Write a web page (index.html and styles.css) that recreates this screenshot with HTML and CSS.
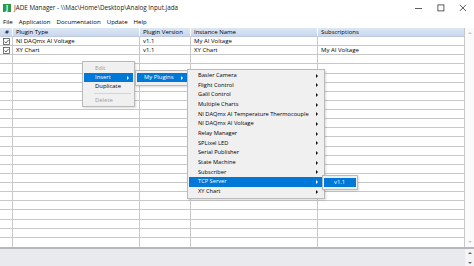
FILE: index.html
```html
<!DOCTYPE html>
<html lang="en">
<head>
    <meta charset="UTF-8">
    <title>JADE Manager</title>
    <link rel="stylesheet" href="styles.css">
</head>
<body>
    <div class="window">
        <!-- Title bar -->
        <div class="titlebar">
            <span class="app-icon">J</span>
            <span class="title">JADE Manager - \\Mac\Home\Desktop\Analog Input.jada</span>
            <div class="win-controls">
                <svg width="8" height="8" viewBox="0 0 8 8"><line x1="0" y1="4.5" x2="7" y2="4.5" stroke="#333" stroke-width="0.8"/></svg>
                <svg width="8" height="8" viewBox="0 0 8 8"><rect x="0.9" y="0.9" width="6" height="6" fill="none" stroke="#333" stroke-width="0.8"/></svg>
                <svg width="8" height="8" viewBox="0 0 8 8"><path d="M0.8 0.8 L7 7 M7 0.8 L0.8 7" stroke="#333" stroke-width="0.8"/></svg>
            </div>
        </div>

        <!-- Menu bar -->
        <div class="menubar">
            <span>File</span>
            <span>Application</span>
            <span>Documentation</span>
            <span>Update</span>
            <span>Help</span>
        </div>

        <!-- Plugin table -->
        <div class="grid-area">
            <div class="table">
                <div class="row head">
                    <span>#</span>
                    <span>Plugin Type</span>
                    <span>Plugin Version</span>
                    <span>Instance Name</span>
                    <span>Subscriptions</span>
                </div>
                <div class="row">
                    <span class="check"><svg width="7" height="7" viewBox="0 0 7 7"><rect x="0.5" y="0.5" width="6" height="6" fill="#fff" stroke="#555" stroke-width="0.8"/><path d="M1.5 3.6 L2.9 5 L5.6 2" fill="none" stroke="#333" stroke-width="0.8"/></svg></span>
                    <span>NI DAQmx AI Voltage</span>
                    <span>v1.1</span>
                    <span>My AI Voltage</span>
                    <span></span>
                </div>
                <div class="row">
                    <span class="check"><svg width="7" height="7" viewBox="0 0 7 7"><rect x="0.5" y="0.5" width="6" height="6" fill="#fff" stroke="#555" stroke-width="0.8"/><path d="M1.5 3.6 L2.9 5 L5.6 2" fill="none" stroke="#333" stroke-width="0.8"/></svg></span>
                    <span>XY Chart</span>
                    <span>v1.1</span>
                    <span>XY Chart</span>
                    <span>My AI Voltage</span>
                </div>
                <div class="row"><span></span><span></span><span></span><span></span><span></span></div>
                <div class="row"><span></span><span></span><span></span><span></span><span></span></div>
                <div class="row"><span></span><span></span><span></span><span></span><span></span></div>
                <div class="row"><span></span><span></span><span></span><span></span><span></span></div>
                <div class="row"><span></span><span></span><span></span><span></span><span></span></div>
                <div class="row"><span></span><span></span><span></span><span></span><span></span></div>
                <div class="row"><span></span><span></span><span></span><span></span><span></span></div>
                <div class="row"><span></span><span></span><span></span><span></span><span></span></div>
                <div class="row"><span></span><span></span><span></span><span></span><span></span></div>
                <div class="row"><span></span><span></span><span></span><span></span><span></span></div>
                <div class="row"><span></span><span></span><span></span><span></span><span></span></div>
                <div class="row"><span></span><span></span><span></span><span></span><span></span></div>
                <div class="row"><span></span><span></span><span></span><span></span><span></span></div>
                <div class="row"><span></span><span></span><span></span><span></span><span></span></div>
                <div class="row"><span></span><span></span><span></span><span></span><span></span></div>
                <div class="row"><span></span><span></span><span></span><span></span><span></span></div>
                <div class="row"><span></span><span></span><span></span><span></span><span></span></div>
                <div class="row"><span></span><span></span><span></span><span></span><span></span></div>
                <div class="row"><span></span><span></span><span></span><span></span><span></span></div>
                <div class="row"><span></span><span></span><span></span><span></span><span></span></div>
                <div class="row last"><span></span><span></span><span></span><span></span><span></span></div>
            </div>
            <div class="vscroll">
                <span class="arrow-up"></span>
                <span class="arrow-down"></span>
            </div>
        </div>

        <!-- Log panel -->
        <div class="log-panel">
            <div class="vscroll small">
                <span class="arrow-up dark"></span>
                <span class="arrow-down dark"></span>
            </div>
        </div>

        <!-- Context menus -->
        <div class="menu menu-main">
            <div class="item disabled">Edit</div>
            <div class="item active sub">Insert</div>
            <div class="item">Duplicate</div>
            <div class="sep"></div>
            <div class="item disabled">Delete</div>
        </div>

        <div class="menu menu-plugins">
            <div class="item active sub">My Plugins</div>
        </div>

        <div class="menu menu-types">
            <div class="item sub">Basler Camera</div>
            <div class="item sub">Flight Control</div>
            <div class="item sub">Galil Control</div>
            <div class="item sub">Multiple Charts</div>
            <div class="item sub">NI DAQmx AI Temperature Thermocouple</div>
            <div class="item sub">NI DAQmx AI Voltage</div>
            <div class="item sub">Relay Manager</div>
            <div class="item sub">SPLixel LED</div>
            <div class="item sub">Serial Publisher</div>
            <div class="item sub">State Machine</div>
            <div class="item sub">Subscriber</div>
            <div class="item active sub">TCP Server</div>
            <div class="item sub">XY Chart</div>
        </div>

        <div class="menu menu-version">
            <div class="item active">v1.1</div>
        </div>
    </div>
</body>
</html>
```

FILE: styles.css
```css
:root {
    --highlight: #0078d7;
    --menu-bg: #f0f0f0;
    --menu-border: #b9b9b9;
    --grid-line: #c8c8c8;
    --text-dim: #9a9a9a;
}

body {
    margin: 0;
    background: #fff;
    font-family: 'Open Sans', 'Noto Sans', sans-serif;
    font-size: 6px;
    color: #000;
}

.window {
    position: relative;
    width: 474px;
    height: 266px;
    overflow: hidden;
    display: flex;
    flex-direction: column;
}

/* Title bar */
.titlebar {
    height: 15px;
    display: flex;
    align-items: center;
    padding-left: 3px;
}

.app-icon {
    width: 8px;
    height: 8px;
    background: #2f9a44;
    color: #fff;
    font-weight: bold;
    font-size: 6.5px;
    line-height: 8px;
    text-align: center;
    margin-right: 3px;
}

.title {
    font-size: 6.3px;
    color: #222;
}

.win-controls {
    margin-left: auto;
    display: flex;
    gap: 14px;
    padding-right: 7px;
}

/* Menu bar */
.menubar {
    height: 13px;
    display: flex;
    align-items: center;
    gap: 6px;
    padding-left: 3px;
    font-size: 6.1px;
}

/* Grid */
.grid-area {
    display: flex;
    height: 219px;
}

.table {
    width: 465px;
    border-right: 1px solid var(--grid-line);
    overflow: hidden;
}

.row {
    display: grid;
    grid-template-columns: 13px 127px 51px 127px 147px;
    height: 9.14px;
    box-sizing: border-box;
    border-bottom: 1px solid var(--grid-line);
}

.row span {
    border-right: 1px solid var(--grid-line);
    padding-left: 3px;
    line-height: 8px;
    white-space: nowrap;
    overflow: hidden;
}

.row span:last-child {
    border-right: none;
}

.row.head {
    height: 9px;
    background: linear-gradient(#dde7f4, #c7d8ee);
    border-bottom: 1px solid #c0cadb;
}

.row.head span {
    padding-left: 3px;
    border-right-color: #fff;
}

.row.head span:first-child {
    padding-left: 5px;
}

.row.last {
    border-bottom: none;
}

.check {
    display: flex;
    align-items: center;
}

.check svg {
    display: block;
}

.vscroll {
    width: 9px;
    background: #fafafa;
    display: flex;
    flex-direction: column;
    justify-content: space-between;
    align-items: center;
    padding: 4px 0;
    box-sizing: border-box;
}

.arrow-up,
.arrow-down {
    width: 0;
    height: 0;
    border-left: 2px solid transparent;
    border-right: 2px solid transparent;
}

.arrow-up {
    border-bottom: 2px solid #c8c8c8;
}

.arrow-down {
    border-top: 2px solid #c8c8c8;
}

.arrow-up.dark {
    border-bottom-color: #666;
}

.arrow-down.dark {
    border-top-color: #666;
}

/* Bottom log panel */
.log-panel {
    flex: 1;
    background: #e8eaed;
    border-top: 2px solid #b4b7bb;
    display: flex;
    justify-content: flex-end;
}

.vscroll.small {
    background: #f4f4f4;
    padding: 3px 0 2px;
}

/* Context menus */
.menu {
    position: absolute;
    background: var(--menu-bg);
    border: 1px solid var(--menu-border);
    box-shadow: 1px 1px 2px rgba(0, 0, 0, 0.15);
    padding: 1px 1px;
    box-sizing: border-box;
    font-size: 5.9px;
}

.item {
    position: relative;
    height: 9px;
    line-height: 9px;
    padding-left: 10px;
    white-space: nowrap;
}

.item.disabled {
    color: var(--text-dim);
}

.item.active {
    background: var(--highlight);
    color: #fff;
}

.item.sub::after {
    content: '';
    position: absolute;
    right: 4px;
    top: 2.5px;
    border-top: 2px solid transparent;
    border-bottom: 2px solid transparent;
    border-left: 2.5px solid #111;
}

.item.active.sub::after {
    border-left-color: #fff;
}

.sep {
    height: 1px;
    background: #d4d4d4;
    margin: 2px 2px 2px 10px;
}

.menu-main {
    left: 82px;
    top: 61px;
    width: 53px;
    padding-top: 2px;
}

.menu-main .item {
    padding-left: 11px;
}

.menu-plugins {
    left: 135px;
    top: 70px;
    width: 54px;
    padding-top: 2px;
    padding-bottom: 3px;
}

.menu-plugins .item {
    padding-left: 7px;
}

.menu-types {
    left: 187px;
    top: 69px;
    width: 138px;
    font-size: 5.7px;
}

.menu-types .item {
    height: 9.67px;
    line-height: 9.67px;
    padding-left: 9px;
}

.menu-types .item.sub::after {
    right: 5px;
    top: 2.8px;
}

.menu-version {
    left: 322px;
    top: 175px;
    width: 36px;
    padding: 2px 1px;
}

.menu-version .item {
    padding-left: 10px;
}
```
